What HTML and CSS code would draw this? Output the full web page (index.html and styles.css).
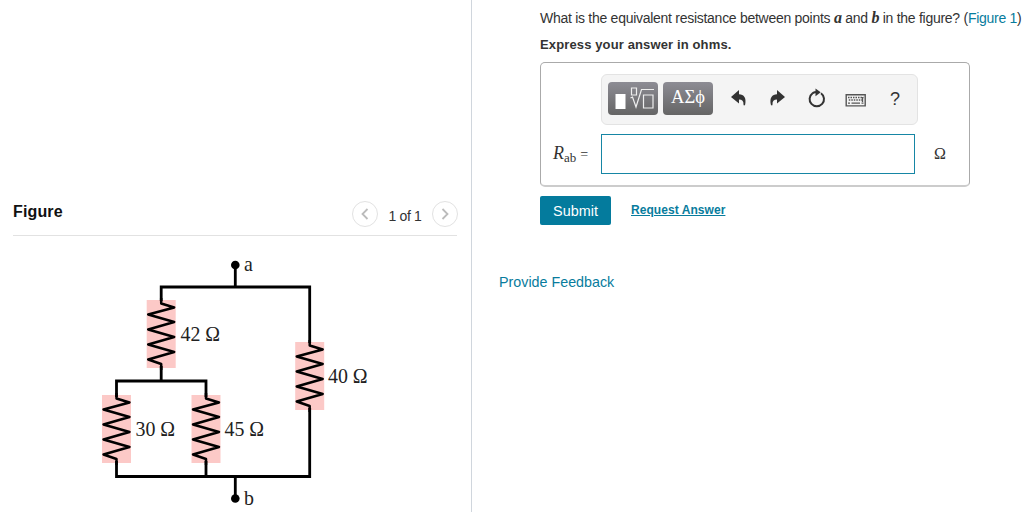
FILE: index.html
```html
<!DOCTYPE html>
<html lang="en">
<head>
<meta charset="utf-8">
<title>Equivalent resistance</title>
<link rel="stylesheet" href="styles.css">
</head>
<body>
<div class="page">
  <section class="figure-panel">
    <header class="figure-header">
      <h2 class="figure-title">Figure</h2>
      <nav class="pager">
        <button class="pager-button" aria-label="Previous"><svg width="26" height="26" viewBox="0 0 26 26"><path d="M15.500 8 10.500 13l5 5"/></svg></button>
        <span class="pager-text">1 of 1</span>
        <button class="pager-button" aria-label="Next"><svg width="26" height="26" viewBox="0 0 26 26"><path d="M10.500 8 15.500 13l-5 5"/></svg></button>
      </nav>
    </header>
    <svg class="circuit" width="471" height="276" viewBox="0 236 471 276">
      <defs>
        <g id="resistor">
          <rect class="resistor-bg" x="-14.500" y="0" width="29" height="68"/>
          <path class="zigzag" d="M0 -2V3.500L13 7.500-13 14.500 13 22-13 29.500 13 37-13 44.500 13 52-13 59.500 0 64V70"/>
        </g>
      </defs>
      <use href="#resistor" x="161.200" y="300"/>
      <use href="#resistor" x="309.700" y="342"/>
      <use href="#resistor" x="116.500" y="395"/>
      <use href="#resistor" x="206" y="395"/>
      <path class="wire" d="M161.200 301V287H309.700V343M235.300 265V287M161.200 366V381M116.500 397V381H206V397M116.500 461V476.500H309.700V408M206 461V476.500M235.300 476.500V498"/>
      <circle cx="235.300" cy="265" r="4.300"/>
      <circle cx="235.300" cy="498.500" r="4.300"/>
      <g class="circuit-label">
        <text x="244" y="271">a</text>
        <text x="244" y="505">b</text>
        <text x="180.500" y="341">42 Ω</text>
        <text x="328" y="383">40 Ω</text>
        <text x="135.500" y="436">30 Ω</text>
        <text x="224.500" y="436">45 Ω</text>
      </g>
    </svg>
  </section>
  <main class="question-panel">
    <div class="question">
      <p class="prompt">What is the equivalent resistance between points <i class="var">a</i> and <i class="var">b</i> in the figure? (<a class="figure-link">Figure 1</a>)</p>
      <p class="instruction">Express your answer in ohms.</p>
      <div class="answer-box">
        <div class="toolbar">
          <button class="tool" aria-label="Templates"><svg width="50" height="33" viewBox="0 0 50 33"><path fill="#fff" d="M7.500 12h10v15h-10z"/><path class="template-line" d="M23.500 6h5v7h-5zM22.500 16l2-1 3.500 10 5.500-17.500H46M35.500 13h9.500v13h-9.500z"/></svg></button>
          <button class="tool tool-greek">ΑΣϕ</button>
          <svg class="tool-icons" width="200" height="34" viewBox="718 82 200 34">
            <path fill="#333" d="M731 97l8-7v4.200c5 .2 7.500 3.500 6.200 10.300-.6 1.200-1.700 1.200-1.700 0 .2-3.500-1.300-5-4.500-5v4z"/>
            <path fill="#333" d="M785 97l-8-7v4.200c-5 .2-7.500 3.500-6.200 10.300.6 1.200 1.700 1.200 1.700 0-.2-3.500 1.300-5 4.500-5v4z"/>
            <path class="reset-arc" d="M812.600 93.200A7.200 7.200 0 1 0 821 93.200M812.600 93.200Q814.500 91.900 817 91.900"/>
            <path fill="#333" d="M815.500 88.500l5.200 3.700-5.200 4z"/>
            <path fill="none" stroke="#555" stroke-width="1.400" d="M846.200 94.700h19v11.200h-19z"/>
            <path class="keys" d="M848 97.500h15.500M848.800 100h15"/>
            <path fill="none" stroke="#555" stroke-width="1.300" d="M848 103.200h2M851.500 103.200h8.500M861.500 103.200h2M862.500 97v5"/>
            <text class="help" x="890" y="104.500">?</text>
          </svg>
        </div>
        <div class="answer-row">
          <label class="answer-label" for="answer"><i>R</i><span class="subscript">ab</span><span class="equals">=</span></label>
          <input class="answer-input" id="answer" type="text">
          <span class="unit">Ω</span>
        </div>
      </div>
      <div class="actions">
        <button class="submit">Submit</button>
        <a class="request">Request Answer</a>
      </div>
    </div>
    <a class="feedback">Provide Feedback</a>
  </main>
</div>
</body>
</html>
```
FILE: styles.css
```css
* { box-sizing: border-box; }
body { margin: 0; background: #fff; color: #333; font-family: "Liberation Sans", Arial, sans-serif; }
button { border: 0; padding: 0; font-family: inherit; }
p, h2 { margin: 0; }
.page { display: flex; width: 1024px; height: 512px; overflow: hidden; }
.figure-panel { width: 472px; flex: none; padding-top: 192px; border-right: 1px solid #d0d6dd; }
.figure-header { display: flex; justify-content: space-between; width: 444px; height: 44px; margin-left: 13px; padding-top: 9px; border-bottom: 1px solid #e2e2e2; }
.figure-title { color: #111; font-size: 16px; line-height: 21px; letter-spacing: .15px; }
.pager { display: flex; margin-right: -1px; }
.pager-button { width: 26px; height: 26px; border: 1px solid #e2e2e2; border-radius: 50%; background: #fff; }
.pager-button svg { display: block; margin: -1px; fill: none; stroke: #bbb; stroke-width: 1.8; }
.pager-text { width: 54px; padding: 5px 0 0; text-align: center; font-size: 14px; line-height: 20px; letter-spacing: -.3px; }
.circuit { display: block; }
.resistor-bg { fill: #fcc9c7; }
.zigzag, .wire { fill: none; stroke: #000; stroke-width: 2.8; }
.zigzag { stroke-width: 2.500; stroke-linejoin: round; }
.circuit-label { fill: #222; font: 19.900px "Liberation Serif", serif; }
.question-panel { flex: none; width: 552px; padding: 8px 0 0 27px; }
.question { padding-left: 41px; }
.prompt { height: 26px; white-space: nowrap; font-size: 14px; line-height: 20px; letter-spacing: -.275px; }
.var { font: italic 700 16px/16px "Liberation Serif", serif; }
.figure-link, .feedback { color: #087c9d; }
.instruction { height: 28px; padding-top: 1px; font-size: 13px; font-weight: 700; line-height: 20px; letter-spacing: .13px; }
.answer-box { width: 430px; height: 125px; padding: 11px 0 0 12px; border: 1px solid #aaa; border-bottom: 2px solid #ccc; border-radius: 5px; }
.toolbar { display: flex; width: 317px; height: 51px; margin-left: 48px; padding: 7px 0 0 6px; border: 1px solid #e3e3e3; border-radius: 6px; background: #f4f4f4; }
.tool { width: 50px; height: 33px; flex: none; margin-right: 5px; border-radius: 4px; background: linear-gradient(#8d8c94, #656565); color: #fff; }
.tool svg { display: block; }
.template-line { fill: none; stroke: #eee; stroke-width: 1.2; }
.tool-greek { padding-bottom: 2px; font: 18.500px "Liberation Serif", serif; }
.tool-icons { flex: none; }
.reset-arc { fill: none; stroke: #333; stroke-width: 2; }
.keys { fill: none; stroke: #555; stroke-width: 1.300; stroke-dasharray: 1.500 1; }
.help { fill: #333; font: 18px "Liberation Sans", sans-serif; }
.answer-row { display: flex; align-items: center; height: 40px; margin-top: 9px; }
.answer-label { width: 48px; flex: none; font: 18px/24px "Liberation Serif", serif; white-space: nowrap; }
.subscript { position: relative; top: 3px; font-size: 13px; }
.equals { margin-left: 4px; font-size: 14px; }
.answer-input { width: 314px; height: 40px; border: 1px solid #1686a5; outline: 0; background: #fff; }
.unit { margin-left: 19px; font: 16px "Liberation Serif", serif; }
.actions { display: flex; align-items: center; margin-top: 9px; }
.submit { width: 71px; height: 29px; border-radius: 2px; background: #047b9d; color: #fff; font-size: 14.400px; }
.request { margin: -2px 0 0 20px; color: #087c9d; font-size: 12px; font-weight: 700; text-decoration: underline; letter-spacing: .06px; }
.feedback { display: block; margin-top: 46px; font-size: 14.300px; line-height: 22px; }
```
